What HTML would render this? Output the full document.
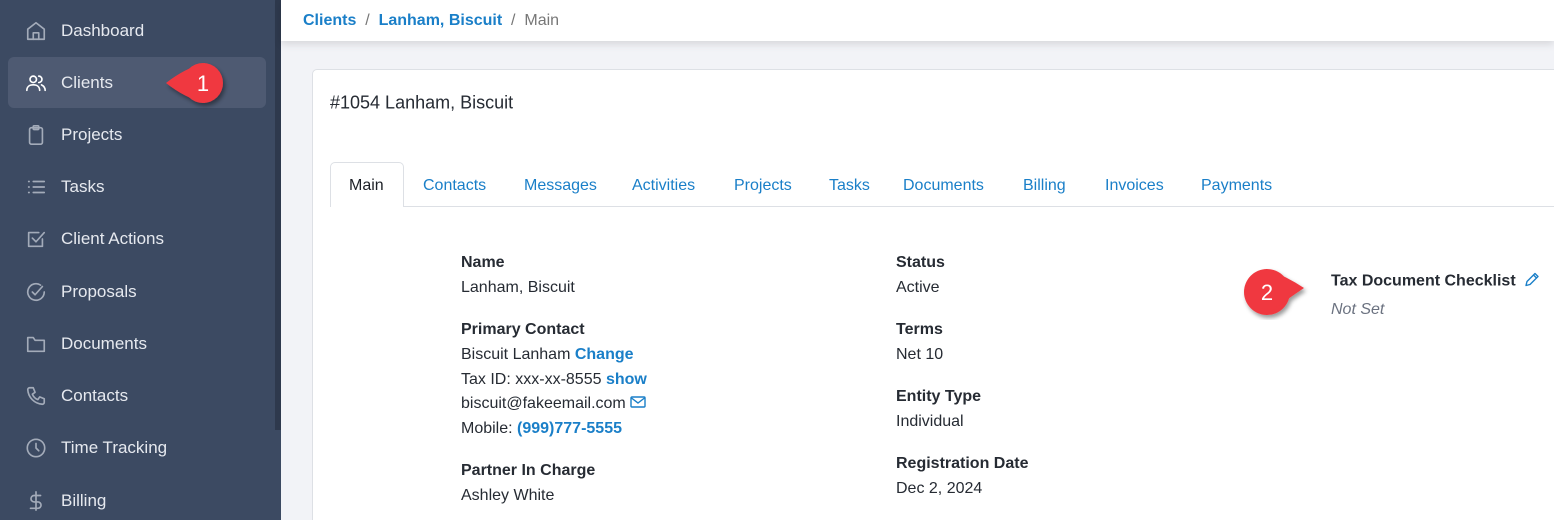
<!DOCTYPE html>
<html><head><meta charset="utf-8"><style>
*{margin:0;padding:0;box-sizing:border-box}
html,body{width:1554px;height:520px;overflow:hidden}
body{background:#f2f3f7;font-family:"Liberation Sans",sans-serif;font-size:16px;color:#262b33;position:relative}
.sb{position:absolute;left:0;top:0;width:281px;height:520px;background:#3c4a62}
.scroll{position:absolute;left:275px;top:0;width:6px;height:430px;background:#2e394d}
.it{position:absolute;left:61px;color:#e6e9ef;font-size:17px;transform:translateY(-50%)}
.ic{position:absolute;left:25px;width:22px;height:22px;transform:translateY(-50%)}
.ic *{fill:none;stroke:#a3abb9;stroke-width:1.8;stroke-linecap:round;stroke-linejoin:round}
.hl{position:absolute;left:8px;top:57px;width:258px;height:51px;background:#4e5a72;border-radius:6px}
.top{position:absolute;left:281px;top:0;right:0;height:41px;background:#fff;box-shadow:0 3px 8px rgba(0,0,0,.12)}
.bc{position:absolute;left:303px;top:12px;font-size:16px;color:#777}
.bc b{color:#1a7fc8;font-weight:bold}
.card{position:absolute;left:312px;top:69px;width:1260px;height:460px;background:#fff;border:1px solid #dde0e5;border-radius:5px}
.t{position:absolute;transform:translateY(-50%);white-space:nowrap}
.blue{color:#1a7fc8}
.lb{font-weight:bold}
.tab{position:absolute;top:186px;transform:translateY(-50%);color:#1a7fc8;font-size:16px}
</style></head><body>
<svg width="0" height="0" style="position:absolute"><defs><filter id="s" x="-30%" y="-30%" width="160%" height="160%"><feDropShadow dx="2" dy="3" stdDeviation="2" flood-opacity=".4"/></filter></defs></svg>
<div class="sb"></div><div class="scroll"></div>
<div class="hl"></div>
<svg class="ic" style="top:31px" viewBox="0 0 24 24"><path d="M3 10l9-7 9 7v11H3z"/><path d="M9 21v-7h6v7"/></svg>
<div class="it" style="top:31px">Dashboard</div>
<svg class="ic" style="top:83px" viewBox="0 0 24 24"><circle cx="9" cy="8" r="3.5" style="stroke:#fff"/><path d="M2 20c0-4 3-6 7-6s7 2 7 6" style="stroke:#fff"/><path d="M15 4.5a3.5 3.5 0 010 7M18 14c2 1 4 3 4 6" style="stroke:#fff"/></svg>
<div class="it" style="top:83px">Clients</div>
<svg class="ic" style="top:135px" viewBox="0 0 24 24"><rect x="5" y="4" width="14" height="18" rx="2"/><rect x="9" y="2" width="6" height="4" rx="1"/></svg>
<div class="it" style="top:135px">Projects</div>
<svg class="ic" style="top:187px" viewBox="0 0 24 24"><path d="M9 6h12M9 12h12M9 18h12M4 6h.5M4 12h.5M4 18h.5"/></svg>
<div class="it" style="top:187px">Tasks</div>
<svg class="ic" style="top:239px" viewBox="0 0 24 24"><path d="M19 12v8H4V5h11"/><path d="M8 11l4 4 9-10"/></svg>
<div class="it" style="top:239px">Client Actions</div>
<svg class="ic" style="top:292px" viewBox="0 0 24 24"><path d="M21 12a9 9 0 11-4-7.5"/><path d="M8 12l3 3 8-9"/></svg>
<div class="it" style="top:292px">Proposals</div>
<svg class="ic" style="top:344px" viewBox="0 0 24 24"><path d="M3 5h6l2 3h10v12H3z"/></svg>
<div class="it" style="top:344px">Documents</div>
<svg class="ic" style="top:396px" viewBox="0 0 24 24"><path d="M5 3h4l2 5-3 2a11 11 0 006 6l2-3 5 2v4a2 2 0 01-2 2A17 17 0 013 5a2 2 0 012-2z"/></svg>
<div class="it" style="top:396px">Contacts</div>
<svg class="ic" style="top:448px" viewBox="0 0 24 24"><circle cx="12" cy="12" r="9.5"/><path d="M12 7v5l3 3"/></svg>
<div class="it" style="top:448px">Time Tracking</div>
<svg class="ic" style="top:501px" viewBox="0 0 24 24"><path d="M12 2v20M17 6H10a3.5 3.5 0 000 7h4a3.5 3.5 0 010 7H6"/></svg>
<div class="it" style="top:501px">Billing</div>

<svg style="position:absolute;left:160px;top:58px" width="80" height="52" viewBox="0 0 80 52"><g filter="url(#s)" fill="#f0393f"><circle cx="43" cy="25" r="20"/><path d="M6 25 Q25 10 45 5 L45 45 Q25 40 6 25z"/></g><text x="43" y="33" fill="#fff" font-size="22" text-anchor="middle" font-family="Liberation Sans">1</text></svg>

<div class="top"></div>
<div class="bc"><b>Clients</b>&nbsp; / &nbsp;<b>Lanham, Biscuit</b>&nbsp; / &nbsp;Main</div>
<div class="card"></div>
<div class="t" style="left:330px;top:103px;font-size:18px">#1054 Lanham, Biscuit</div>
<div style="position:absolute;left:330px;top:206px;right:0;height:1px;background:#dde0e5"></div>
<div style="position:absolute;left:330px;top:162px;width:74px;height:45px;background:#fff;border:1px solid #dde0e5;border-bottom:none;border-radius:5px 5px 0 0"></div>
<div class="tab" style="left:349px;color:#1d2027">Main</div>
<div class="tab" style="left:423px">Contacts</div>
<div class="tab" style="left:524px">Messages</div>
<div class="tab" style="left:632px">Activities</div>
<div class="tab" style="left:734px">Projects</div>
<div class="tab" style="left:829px">Tasks</div>
<div class="tab" style="left:903px">Documents</div>
<div class="tab" style="left:1023px">Billing</div>
<div class="tab" style="left:1105px">Invoices</div>
<div class="tab" style="left:1201px">Payments</div>

<div class="t lb" style="left:461px;top:263px">Name</div>
<div class="t" style="left:461px;top:288px">Lanham, Biscuit</div>
<div class="t lb" style="left:461px;top:330px">Primary Contact</div>
<div class="t" style="left:461px;top:355px">Biscuit Lanham <b class="blue">Change</b></div>
<div class="t" style="left:461px;top:380px">Tax ID: xxx-xx-8555 <b class="blue">show</b></div>
<div class="t" style="left:461px;top:404px">biscuit@fakeemail.com <svg width="16" height="14" viewBox="0 0 16 14" style="vertical-align:-1px"><rect x="1" y="2" width="14" height="10" rx="1" fill="none" stroke="#1a7fc8" stroke-width="1.4"/><path d="M1.5 3l6.5 5 6.5-5" fill="none" stroke="#1a7fc8" stroke-width="1.4"/></svg></div>
<div class="t" style="left:461px;top:429px">Mobile: <b class="blue">(999)777-5555</b></div>
<div class="t lb" style="left:461px;top:471px">Partner In Charge</div>
<div class="t" style="left:461px;top:496px">Ashley White</div>

<div class="t lb" style="left:896px;top:263px">Status</div>
<div class="t" style="left:896px;top:288px">Active</div>
<div class="t lb" style="left:896px;top:330px">Terms</div>
<div class="t" style="left:896px;top:355px">Net 10</div>
<div class="t lb" style="left:896px;top:397px">Entity Type</div>
<div class="t" style="left:896px;top:422px">Individual</div>
<div class="t lb" style="left:896px;top:464px">Registration Date</div>
<div class="t" style="left:896px;top:489px">Dec 2, 2024</div>

<div class="t lb" style="left:1331px;top:281px">Tax Document Checklist <svg width="16" height="16" viewBox="0 0 16 16" style="vertical-align:-2px;margin-left:4px"><path d="M2 14l1-4 8-8 3 3-8 8z M9.5 3.5l3 3" fill="none" stroke="#1a7fc8" stroke-width="1.4" stroke-linejoin="round"/></svg></div>
<div class="t" style="left:1331px;top:310px;font-style:italic;color:#6b7280">Not Set</div>

<svg style="position:absolute;left:1236px;top:262px" width="80" height="58" viewBox="0 0 80 58"><g filter="url(#s)" fill="#f0393f"><circle cx="31" cy="30" r="23"/><path d="M68 26 Q50 38 30 53 L30 7 Q50 14 68 26z"/></g><text x="31" y="38" fill="#fff" font-size="22" text-anchor="middle" font-family="Liberation Sans">2</text></svg>
</body></html>
